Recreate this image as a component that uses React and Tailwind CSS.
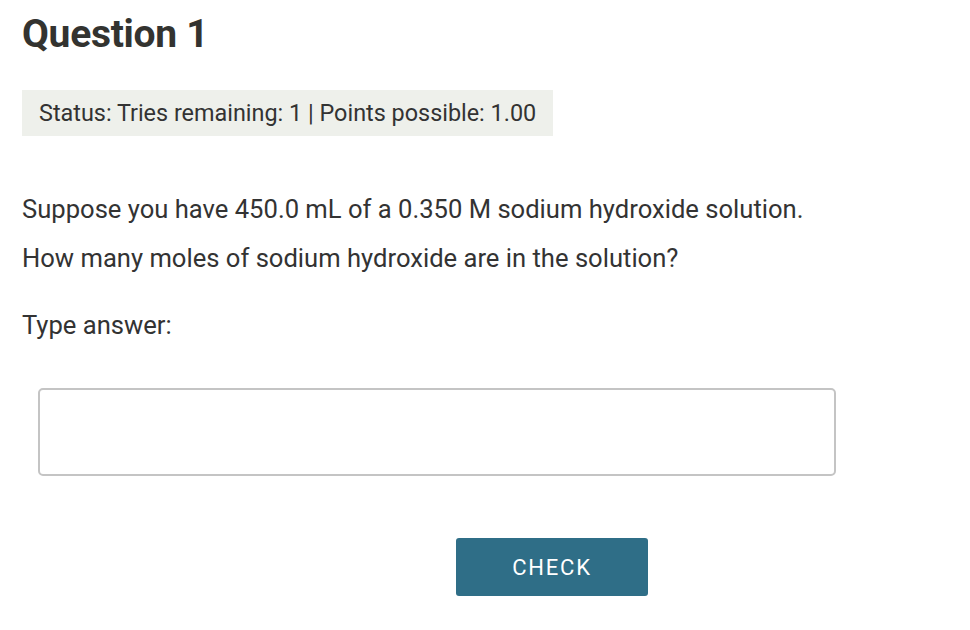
export default function App() {
  return (
    <div className="min-h-[630px] w-[970px] bg-white text-[#333333]" style={{ fontFamily: "Roboto, 'Noto Sans', sans-serif" }}>
      <div className="pl-[22px] pt-[10px]">
        <h1 className="text-[39px] font-bold leading-[48px] tracking-[-0.3px] text-[#333330]">Question 1</h1>
        <div className="mt-[32px] inline-block bg-[#eef0eb] px-[17px] py-[11px] text-[23.4px] leading-[24px]">
          Status: Tries remaining: 1 | Points possible: 1.00
        </div>
        <p className="mt-[58px] text-[25.6px] leading-[30px]">Suppose you have 450.0 mL of a 0.350 M sodium hydroxide solution.</p>
        <p className="mt-[19px] text-[25.6px] leading-[30px]">How many moles of sodium hydroxide are in the solution?</p>
        <p className="mt-[37px] text-[25.6px] leading-[30px]">Type answer:</p>
        <div className="mt-[48px] pl-[16px]">
          <input type="text" className="block h-[88px] w-[798px] rounded-[5px] border-2 border-[#c4c4c4] bg-white outline-none" />
        </div>
        <div className="mt-[62px] flex">
          <button className="ml-[434px] h-[58px] w-[192px] rounded-[3px] bg-[#2f6e87] text-[22px] tracking-[1.8px] text-white">CHECK</button>
        </div>
      </div>
    </div>
  );
}
